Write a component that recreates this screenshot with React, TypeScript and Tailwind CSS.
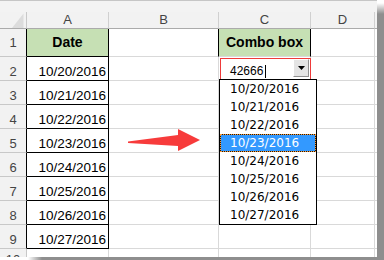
import React from "react";

const dates = [
  "10/20/2016",
  "10/21/2016",
  "10/22/2016",
  "10/23/2016",
  "10/24/2016",
  "10/25/2016",
  "10/26/2016",
  "10/27/2016",
];

const hdr = "bg-[#f2f2f2] text-[#444] text-[13px] flex justify-center";

export default function App() {
  return (
    <div className="relative w-[384px] h-[260px] overflow-hidden bg-white flex font-['Liberation_Sans',Arial,sans-serif] text-black">
      <div className="w-[377px] flex flex-col">
        <div className="h-[12px] border-t border-[#c6c6c6] bg-[#f3f3f3]" />
        <div className="grid grid-cols-[27px_82px_110px_92px_64px_2px] grid-rows-[17px_28px_repeat(8,24px)_8px]">
          {/* column header row */}
          <div className={`${hdr} border-r border-b border-r-[#c8c8c8] border-b-[#ababab]`}>
            <svg width="26" height="16" className="block">
              <polygon points="23.5,1.5 23.5,16 12,16" fill="#dcdcdc" />
            </svg>
          </div>
          {["A", "B", "C", "D"].map((l) => (
            <div
              key={l}
              className={`${hdr} items-center border-r border-b border-r-[#d0d0d0] border-b-[#ababab] leading-[16px]`}
            >
              {l}
            </div>
          ))}
          <div className="bg-[#f2f2f2] border-b border-[#ababab]" />

          {/* row 1 */}
          <div className={`${hdr} items-center border-r border-b border-r-black border-b-[#c8c8c8]`}>1</div>
          <div className="bg-[#c6e0b4] border-r border-b border-black flex items-center justify-center font-bold text-[14px]">
            Date
          </div>
          <div className="border-r border-b border-r-black border-b-[#d9d9d9]" />
          <div className="bg-[#c6e0b4] border-r border-b border-r-black border-b-[#d9d9d9] flex items-center justify-center font-bold text-[14px]">
            Combo box
          </div>
          <div className="border-r border-b border-[#d9d9d9]" />
          <div className="border-b border-[#d9d9d9]" />

          {/* rows 2-9 */}
          {dates.map((d, i) => (
            <React.Fragment key={d}>
              <div className={`${hdr} items-end leading-[16px] border-r border-b border-r-black border-b-[#c8c8c8]`}>
                {i + 2}
              </div>
              <div className="border-r border-b border-black flex items-end justify-end pr-[2px] text-[13.5px] leading-[16px]">
                {d}
              </div>
              <div className="border-r border-b border-[#d9d9d9]" />
              <div className="border-r border-b border-[#d9d9d9]" />
              <div className="border-r border-b border-[#d9d9d9]" />
              <div className="border-b border-[#d9d9d9]" />
            </React.Fragment>
          ))}

          {/* row 10 partial */}
          <div className={`${hdr} items-start overflow-hidden border-r border-[#c8c8c8] leading-[16px] pt-[3px]`}>
            10
          </div>
          <div className="border-r border-[#d9d9d9]" />
          <div className="border-r border-[#d9d9d9]" />
          <div className="border-r border-[#d9d9d9]" />
          <div className="border-r border-[#d9d9d9]" />
          <div />
        </div>
        <div className="h-[3px] bg-[linear-gradient(to_right,#ffffff_28px,#8e8e8e_42px)]" />
      </div>
      <div className="w-[7px] bg-[linear-gradient(to_bottom,#ffffff_3px,#8e8e8e_14px)]" />

      {/* red arrow */}
      <svg className="absolute left-[126px] top-[127px]" width="76" height="26">
        <polygon
          points="2,14.5 52,8 52,2 74,13 52,24 52,19 2,16"
          fill="#f73b3b"
        />
      </svg>

      {/* combo box */}
      <div className="absolute left-[220px] top-[58px] w-[91px] h-[22px] border border-[#ee3a3a] bg-white flex">
        <div className="flex-1 pl-[9px] pt-[4px] text-[12px] leading-[16px] flex items-start">
          <span>42666</span>
          <span className="inline-block w-px h-[13px] bg-black ml-[2px] mt-[2px]" />
        </div>
        <div className="w-[16px] h-[18px] mr-[1px] bg-[#e4e4e4] border border-t-white border-l-white border-r-[#8f8f8f] border-b-[#8f8f8f] flex items-center justify-center">
          <svg width="7" height="4" className="block">
            <polygon points="0,0 7,0 3.5,4" fill="#000" />
          </svg>
        </div>
      </div>

      {/* dropdown list */}
      <div className="absolute left-[219px] top-[79px] w-[98px] border border-black bg-white font-['DejaVu_Sans',sans-serif] text-[12px] leading-[18px]">
        {dates.map((d) =>
          d === "10/23/2016" ? (
            <div key={d} className="bg-[#1a1a1a]">
              <div className="h-[18px] pl-[9px] border border-dotted border-[#ff9a2e] bg-[#3399ff] bg-clip-padding text-white leading-[16px]">
                {d}
              </div>
            </div>
          ) : (
            <div key={d} className="h-[18px] pl-[10px] text-[#000]">
              {d}
            </div>
          )
        )}
      </div>
    </div>
  );
}
